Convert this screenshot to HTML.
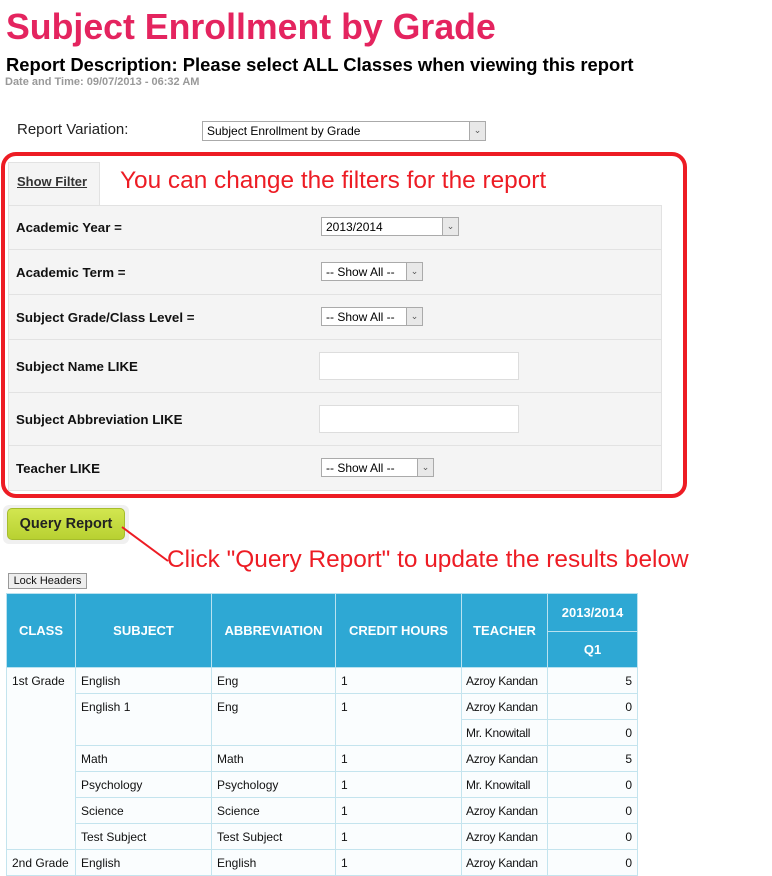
<!DOCTYPE html>
<html><head><meta charset="utf-8"><style>
*{margin:0;padding:0;box-sizing:border-box}
body{width:772px;height:875px;overflow:hidden;background:#fff;font-family:"Liberation Sans",Arial,sans-serif;position:relative}
.a{position:absolute;white-space:nowrap}
.sel{position:absolute;border:1px solid #aaa;background:#fff;font-size:12px;color:#000;padding:2px 4px;height:19px;line-height:14px;white-space:nowrap}
.sel .ar{position:absolute;right:0;top:0;width:16px;height:17px;background:#e8e8e8;border-left:1px solid #aaa;font-size:9px;color:#555;text-align:center;line-height:17px}
.row{position:absolute;left:8px;width:654px;border-bottom:1px solid #e2e2e2}
.lbl{position:absolute;font-size:13.3px;font-weight:bold;color:#111;white-space:nowrap}
.inp{position:absolute;left:319px;width:200px;height:28px;background:#fff;border:1px solid #ddd}
table{position:absolute;left:6px;top:593px;border-collapse:collapse;font-size:12px;table-layout:fixed;width:631px}
th{background:#2ea8d4;color:#fff;font-weight:bold;font-size:13px;border:1px solid #b9e2f0;text-align:center;white-space:nowrap}
td{border:1px solid #c4e4ee;height:26px;padding:0 5px;color:#111;background:#fafdfe;vertical-align:top;padding-top:6px;white-space:nowrap;overflow:hidden;line-height:14px}
.t{letter-spacing:-0.3px;padding-left:4px}
</style></head><body>
<div class="a" style="left:6px;top:7px;font-size:35.7px;font-weight:bold;color:#e4245f">Subject Enrollment by Grade</div>
<div class="a" style="left:6px;top:54px;font-size:18.4px;font-weight:bold;color:#000">Report Description: Please select ALL Classes when viewing this report</div>
<div class="a" style="left:5px;top:76px;font-size:11px;font-weight:bold;color:#999">Date and Time: 09/07/2013 - 06:32 AM</div>
<div class="a" style="left:17px;top:121px;font-size:15px;color:#222">Report Variation:</div>
<div class="sel" style="left:202px;top:121px;width:284px;height:20px">Subject Enrollment by Grade<div class="ar" style="height:18px">&#8964;</div></div>

<div class="a" style="left:8px;top:162px;width:92px;height:44px;background:#f4f4f4;border:1px solid #e2e2e2;border-bottom:none"></div>
<div class="a" style="left:17px;top:174px;font-size:13px;font-weight:bold;color:#333;text-decoration:underline">Show Filter</div>
<div class="a" style="left:120px;top:167px;font-size:24.4px;color:#ed1c24">You can change the filters for the report</div>
<div class="a" style="left:8px;top:205px;width:654px;height:286px;background:#f4f4f4;border:1px solid #e2e2e2"></div>
<div class="row" style="top:205px;height:45px"></div>
<div class="row" style="top:250px;height:45px"></div>
<div class="row" style="top:295px;height:45px"></div>
<div class="row" style="top:340px;height:53px"></div>
<div class="row" style="top:393px;height:53px"></div>
<div class="lbl" style="left:16px;top:220px">Academic Year =</div>
<div class="lbl" style="left:16px;top:265px">Academic Term =</div>
<div class="lbl" style="left:16px;top:310px">Subject Grade/Class Level =</div>
<div class="lbl" style="left:16px;top:359px">Subject Name LIKE</div>
<div class="lbl" style="left:16px;top:412px">Subject Abbreviation LIKE</div>
<div class="lbl" style="left:16px;top:461px">Teacher LIKE</div>
<div class="sel" style="left:321px;top:217px;width:138px">2013/2014<div class="ar">&#8964;</div></div>
<div class="sel" style="left:321px;top:262px;width:102px">-- Show All --<div class="ar">&#8964;</div></div>
<div class="sel" style="left:321px;top:307px;width:102px">-- Show All --<div class="ar">&#8964;</div></div>
<div class="inp" style="top:352px"></div>
<div class="inp" style="top:405px"></div>
<div class="sel" style="left:321px;top:458px;width:113px">-- Show All --<div class="ar">&#8964;</div></div>
<div class="a" style="left:1px;top:152px;width:686px;height:346px;border:4px solid #ed1c24;border-radius:15px"></div>

<div class="a" style="left:3px;top:505px;width:126px;height:39px;background:#f0f0f0;border-radius:6px"></div>
<div class="a" style="left:7px;top:508px;width:118px;height:32px;background:linear-gradient(#d2e650,#b8d132);border:1px solid #a6bd2c;border-radius:5px;font-size:14.5px;font-weight:bold;color:#222;text-align:center;line-height:30px">Query Report</div>
<svg class="a" style="left:120px;top:525px" width="60" height="40"><line x1="2" y1="2" x2="48" y2="36" stroke="#ed1c24" stroke-width="2"/></svg>
<div class="a" style="left:167px;top:546px;font-size:24.4px;color:#ed1c24">Click "Query Report" to update the results below</div>
<div class="a" style="left:8px;top:573px;width:79px;height:16px;background:#eee;border:1px solid #999;font-size:11px;line-height:14px;text-align:center;color:#111">Lock Headers</div>

<table>
<colgroup><col style="width:69px"><col style="width:136px"><col style="width:124px"><col style="width:126px"><col style="width:86px"><col style="width:90px"></colgroup>
<tr><th rowspan="2" style="height:74px">CLASS</th><th rowspan="2">SUBJECT</th><th rowspan="2">ABBREVIATION</th><th rowspan="2">CREDIT HOURS</th><th rowspan="2">TEACHER</th><th style="height:38px">2013/2014</th></tr>
<tr><th style="height:36px">Q1</th></tr>
<tr><td rowspan="7">1st Grade</td><td>English</td><td>Eng</td><td>1</td><td class="t">Azroy Kandan</td><td style="text-align:right">5</td></tr>
<tr><td rowspan="2">English 1</td><td rowspan="2">Eng</td><td rowspan="2">1</td><td class="t">Azroy Kandan</td><td style="text-align:right">0</td></tr>
<tr><td class="t">Mr. Knowitall</td><td style="text-align:right">0</td></tr>
<tr><td>Math</td><td>Math</td><td>1</td><td class="t">Azroy Kandan</td><td style="text-align:right">5</td></tr>
<tr><td>Psychology</td><td>Psychology</td><td>1</td><td class="t">Mr. Knowitall</td><td style="text-align:right">0</td></tr>
<tr><td>Science</td><td>Science</td><td>1</td><td class="t">Azroy Kandan</td><td style="text-align:right">0</td></tr>
<tr><td>Test Subject</td><td>Test Subject</td><td>1</td><td class="t">Azroy Kandan</td><td style="text-align:right">0</td></tr>
<tr><td style="padding-left:5px">2nd Grade</td><td>English</td><td>English</td><td>1</td><td class="t">Azroy Kandan</td><td style="text-align:right">0</td></tr>
</table>
</body></html>
